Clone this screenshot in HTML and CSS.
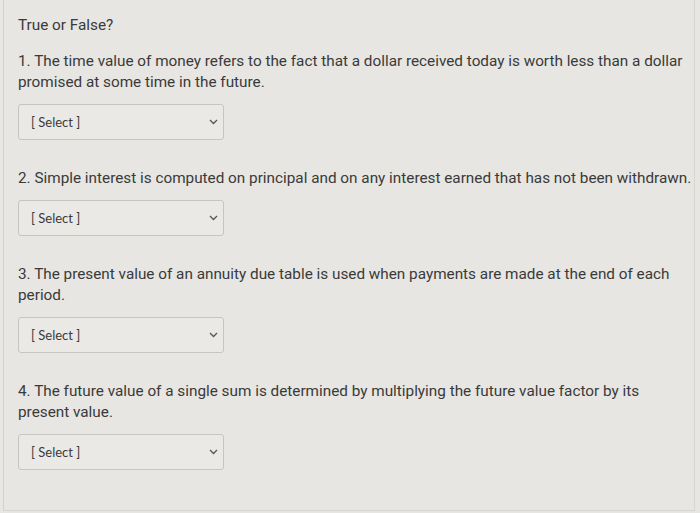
FILE: index.html
```html
<!DOCTYPE html>
<html lang="en">
  <head>
    <meta charset="UTF-8" />
    <meta name="viewport" content="width=device-width, initial-scale=1.0" />
    <title>True or False</title>
    <link rel="stylesheet" href="styles.css">
  </head>
  <body>
    <div class="quiz">
      <p class="intro">True or False?</p>

      <div class="question">
        <p>1. The time value of money refers to the fact that a dollar received today is worth less than a dollar promised at some time in the future.</p>
        <div class="select-wrap">
          <select class="answer">
            <option>[ Select ]</option>
            <option>True</option>
            <option>False</option>
          </select>
          <svg class="chevron" width="9" height="6" viewBox="0 0 9 6"><path d="M1 1l3.5 3.5L8 1" fill="none" stroke="#555" stroke-width="1.3"/></svg>
        </div>
      </div>

      <div class="question">
        <p>2. Simple interest is computed on principal and on any interest earned that has not been withdrawn.</p>
        <div class="select-wrap">
          <select class="answer">
            <option>[ Select ]</option>
            <option>True</option>
            <option>False</option>
          </select>
          <svg class="chevron" width="9" height="6" viewBox="0 0 9 6"><path d="M1 1l3.5 3.5L8 1" fill="none" stroke="#555" stroke-width="1.3"/></svg>
        </div>
      </div>

      <div class="question">
        <p>3. The present value of an annuity due table is used when payments are made at the end of each period.</p>
        <div class="select-wrap">
          <select class="answer">
            <option>[ Select ]</option>
            <option>True</option>
            <option>False</option>
          </select>
          <svg class="chevron" width="9" height="6" viewBox="0 0 9 6"><path d="M1 1l3.5 3.5L8 1" fill="none" stroke="#555" stroke-width="1.3"/></svg>
        </div>
      </div>

      <div class="question">
        <p>4. The future value of a single sum is determined by multiplying the future value factor by its present value.</p>
        <div class="select-wrap">
          <select class="answer">
            <option>[ Select ]</option>
            <option>True</option>
            <option>False</option>
          </select>
          <svg class="chevron" width="9" height="6" viewBox="0 0 9 6"><path d="M1 1l3.5 3.5L8 1" fill="none" stroke="#555" stroke-width="1.3"/></svg>
        </div>
      </div>
    </div>
  </body>
</html>
```

FILE: styles.css
```css
body {
  margin: 0;
  background-color: #e7e6e2;
  font-family: Roboto, "Liberation Sans", sans-serif;
  font-size: 15.3px;
  color: #3a3a3a;
}
.quiz {
  height: 511px;
  padding: 15px 0 0 14px;
  border-left: 1px solid #d2d1cd;
  border-right: 1px solid #d6d5d1;
  border-bottom: 1px solid #d6d5d1;
  margin-left: 3px;
  width: 692px;
  box-sizing: border-box;
}
p {
  margin: 0;
  line-height: 21px;
}
.intro {
  margin-bottom: 15px;
}
.question {
  width: 675px;
  margin-bottom: 28px;
}
.question p {
  margin-bottom: 11px;
}
.select-wrap {
  position: relative;
  width: 206px;
}
.answer {
  appearance: none;
  -webkit-appearance: none;
  width: 206px;
  height: 36px;
  padding: 0 12px;
  font-family: Lato, "Open Sans", sans-serif;
  font-size: 13px;
  color: #3a3a3a;
  background-color: #eae9e6;
  border: 1px solid #c6c5c1;
  border-radius: 3px;
}
.chevron {
  position: absolute;
  right: 6px;
  top: 15px;
}
```
